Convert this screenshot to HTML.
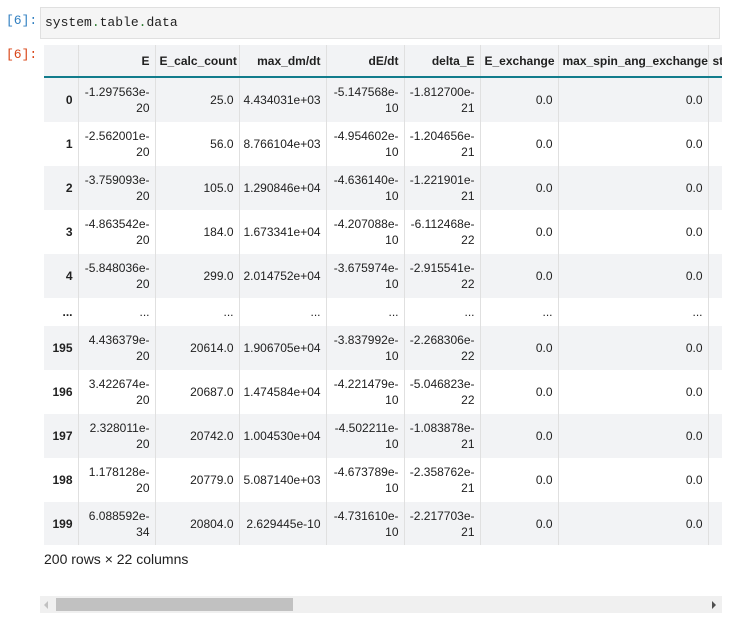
<!DOCTYPE html>
<html><head><meta charset="utf-8"><style>
body{margin:0;width:737px;height:620px;background:#fff;font-family:"Liberation Sans",sans-serif;position:relative;overflow:hidden}
.p{position:absolute;font-family:"Liberation Mono",monospace;font-size:13px}
.in{position:absolute;left:40px;top:7px;width:680px;height:32px;background:#f5f5f5;border:1px solid #e0e0e0;box-sizing:border-box;font-family:"Liberation Mono",monospace;font-size:13px;line-height:30px;padding-left:4px;color:#212121}
.wrap{position:absolute;left:44px;top:45px;width:678px;height:500px;overflow:hidden}
table{border-collapse:collapse;table-layout:fixed;font-size:12px;color:#212121;width:724px}
td,th{text-align:right;padding:0 5px 0 4px;border-left:1px solid #e0e0e0;overflow:hidden;white-space:nowrap;line-height:16px}
thead th{font-weight:bold;height:31px}
tbody th{font-weight:bold}
thead tr{background:#f2f3f5;border-bottom:2px solid #127c8c}
tbody tr{height:44px}
tbody tr td,tbody tr th{height:44px}
tbody tr:nth-child(odd){background:#f2f3f5}
tbody tr.e, tbody tr.e td, tbody tr.e th{height:28px;line-height:12px}
tbody th{border-left:none}
thead th:first-child{border-left:none}
</style></head><body>
<div class="p" style="left:6px;top:13px;color:#307fc1">[6]:</div>
<div class="in">system<span style="color:#2e7d32">.</span>table<span style="color:#2e7d32">.</span>data</div>
<div class="p" style="left:6px;top:47px;color:#d84315">[6]:</div>
<div class="wrap"><table>
<colgroup><col style="width:34px"><col style="width:77px"><col style="width:84px"><col style="width:87px"><col style="width:78px"><col style="width:76px"><col style="width:78px"><col style="width:150px"><col style="width:60px"></colgroup>
<thead><tr><th></th><th>E</th><th>E_calc_count</th><th>max_dm/dt</th><th>dE/dt</th><th>delta_E</th><th>E_exchange</th><th>max_spin_ang_exchange</th><th style="text-align:left">step</th></tr></thead>
<tbody>
<tr><th>0</th><td>-1.297563e-<br>20</td><td>25.0</td><td>4.434031e+03</td><td>-5.147568e-<br>10</td><td>-1.812700e-<br>21</td><td>0.0</td><td>0.0</td><td></td></tr>
<tr><th>1</th><td>-2.562001e-<br>20</td><td>56.0</td><td>8.766104e+03</td><td>-4.954602e-<br>10</td><td>-1.204656e-<br>21</td><td>0.0</td><td>0.0</td><td></td></tr>
<tr><th>2</th><td>-3.759093e-<br>20</td><td>105.0</td><td>1.290846e+04</td><td>-4.636140e-<br>10</td><td>-1.221901e-<br>21</td><td>0.0</td><td>0.0</td><td></td></tr>
<tr><th>3</th><td>-4.863542e-<br>20</td><td>184.0</td><td>1.673341e+04</td><td>-4.207088e-<br>10</td><td>-6.112468e-<br>22</td><td>0.0</td><td>0.0</td><td></td></tr>
<tr><th>4</th><td>-5.848036e-<br>20</td><td>299.0</td><td>2.014752e+04</td><td>-3.675974e-<br>10</td><td>-2.915541e-<br>22</td><td>0.0</td><td>0.0</td><td></td></tr>
<tr class="e"><th>...</th><td>...</td><td>...</td><td>...</td><td>...</td><td>...</td><td>...</td><td>...</td><td></td></tr>
<tr><th>195</th><td>4.436379e-<br>20</td><td>20614.0</td><td>1.906705e+04</td><td>-3.837992e-<br>10</td><td>-2.268306e-<br>22</td><td>0.0</td><td>0.0</td><td></td></tr>
<tr><th>196</th><td>3.422674e-<br>20</td><td>20687.0</td><td>1.474584e+04</td><td>-4.221479e-<br>10</td><td>-5.046823e-<br>22</td><td>0.0</td><td>0.0</td><td></td></tr>
<tr><th>197</th><td>2.328011e-<br>20</td><td>20742.0</td><td>1.004530e+04</td><td>-4.502211e-<br>10</td><td>-1.083878e-<br>21</td><td>0.0</td><td>0.0</td><td></td></tr>
<tr><th>198</th><td>1.178128e-<br>20</td><td>20779.0</td><td>5.087140e+03</td><td>-4.673789e-<br>10</td><td>-2.358762e-<br>21</td><td>0.0</td><td>0.0</td><td></td></tr>
<tr><th>199</th><td>6.088592e-<br>34</td><td>20804.0</td><td>2.629445e-10</td><td>-4.731610e-<br>10</td><td>-2.217703e-<br>21</td><td>0.0</td><td>0.0</td><td></td></tr>
</tbody></table></div>
<div style="position:absolute;left:44px;top:551px;font-size:14px;color:#212121">200 rows × 22 columns</div>
<div style="position:absolute;left:40px;top:596px;width:682px;height:17px;background:#f0f0f0"></div>
<div style="position:absolute;left:56px;top:598px;width:237px;height:13px;background:#c1c1c1"></div>
<div style="position:absolute;left:44px;top:601px;width:0;height:0;border-top:4px solid transparent;border-bottom:4px solid transparent;border-right:4px solid #c1c1c1"></div>
<div style="position:absolute;left:712px;top:601px;width:0;height:0;border-top:4px solid transparent;border-bottom:4px solid transparent;border-left:4px solid #505050"></div>
</body></html>
